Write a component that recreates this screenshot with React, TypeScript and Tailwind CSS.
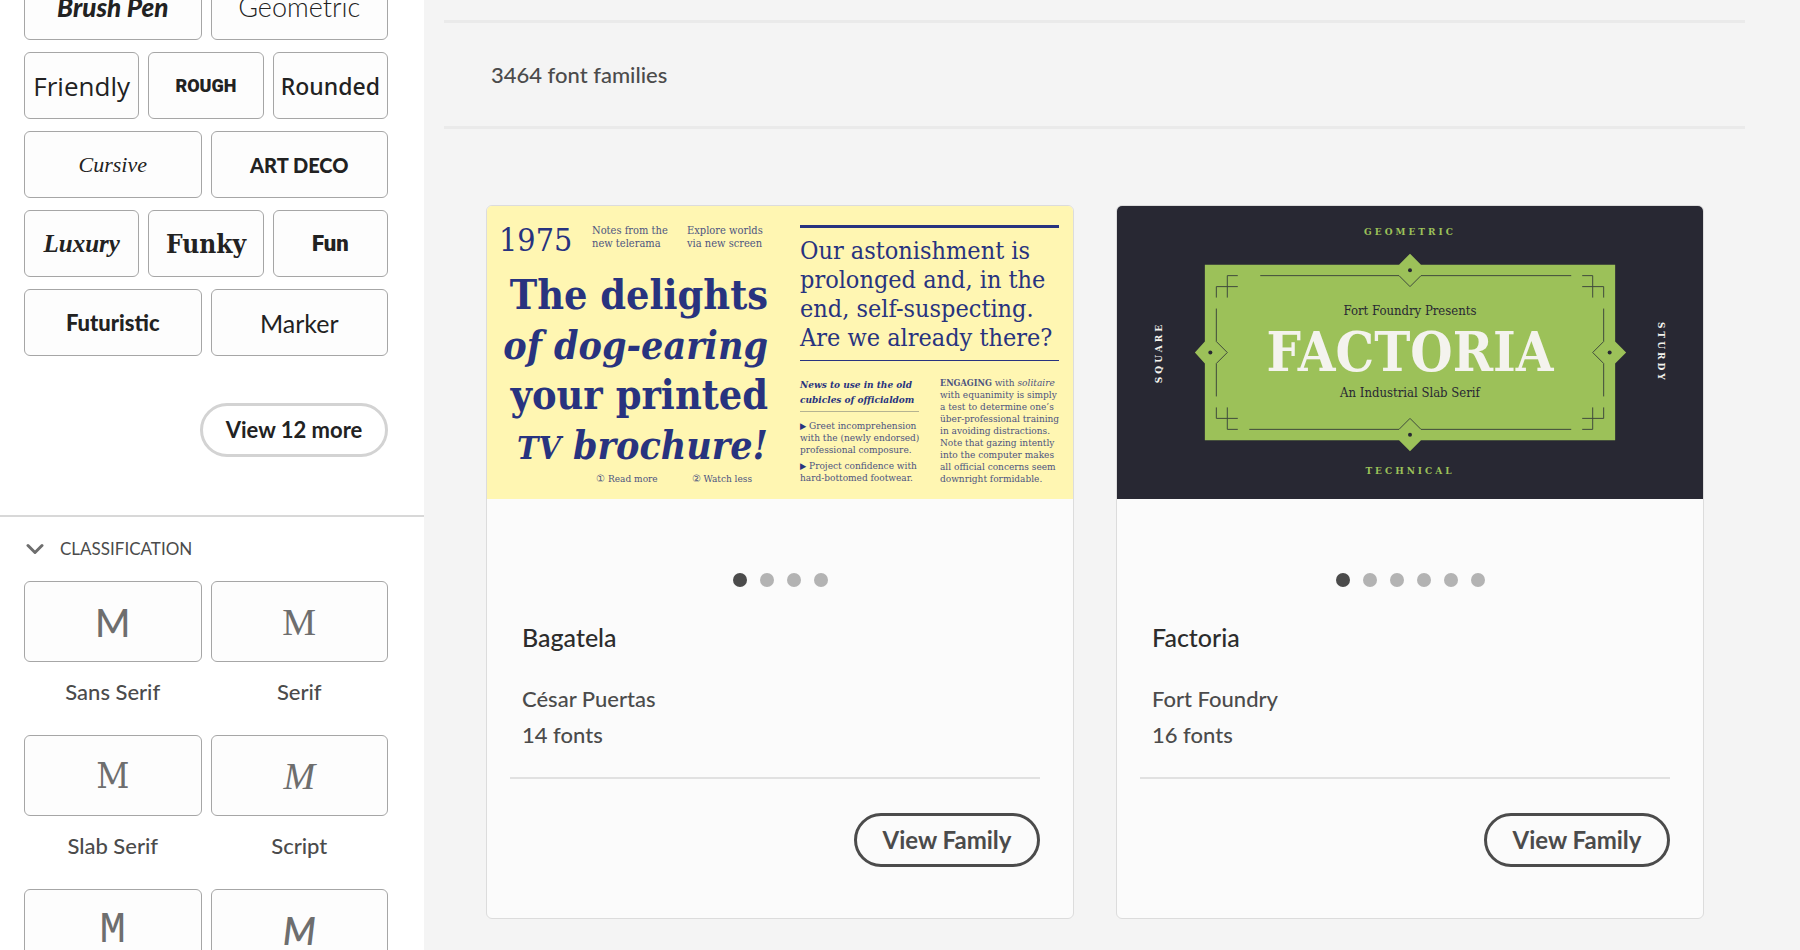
import clsx from "clsx";
import { ReactNode } from "react";

const tags = [
    { name: "Brush Pen", wide: true, font: "font-['Lato'] text-[26px] font-black italic" },
    { name: "Geometric", wide: true, font: "font-['Lato'] text-[27px] font-light" },
    { name: "Friendly", wide: false, font: "font-['Open_Sans'] text-[26px]" },
    { name: "ROUGH", wide: false, font: "font-['Roboto'] text-[18px] font-black" },
    { name: "Rounded", wide: false, font: "font-['Noto_Sans'] text-[23px] font-medium" },
    { name: "Cursive", wide: true, font: "font-['Liberation_Serif'] text-[22px] italic" },
    { name: "ART DECO", wide: true, font: "font-['Lato'] text-[20px] font-black" },
    { name: "Luxury", wide: false, font: "font-['Liberation_Serif'] text-[25px] font-bold italic" },
    { name: "Funky", wide: false, font: "font-['DejaVu_Serif_Condensed'] text-[26px] font-bold" },
    { name: "Fun", wide: false, font: "font-['Roboto'] text-[22px] font-black" },
    { name: "Futuristic", wide: true, font: "font-['Lato'] text-[22px] font-black" },
    { name: "Marker", wide: true, font: "font-['Lato'] text-[25px]" },
];

const classifications = [
    { name: "Sans Serif", font: "font-['Lato'] text-[38px] font-medium" },
    { name: "Serif", font: "font-['Liberation_Serif'] text-[38px]" },
    { name: "Slab Serif", font: "font-['DejaVu_Serif_Condensed'] text-[36px]" },
    { name: "Script", font: "font-['Liberation_Serif'] text-[38px] italic" },
    { name: "Mono", font: "font-['Liberation_Mono'] text-[44px]" },
    { name: "Hand", font: "font-['Lato'] text-[38px] font-semibold italic" },
];

const Sidebar = () => {
    return (
        <aside className="w-[424px] shrink-0 bg-white">
            <div className="-mt-[27px] grid grid-cols-6 gap-x-[9px] gap-y-3 pr-9 pl-6">
                {tags.map((tag) => (
                    <button
                        key={tag.name}
                        type="button"
                        className={clsx(
                            tag.wide ? "col-span-3" : "col-span-2",
                            tag.font,
                            "h-[67px] rounded-md border border-[#a6a6a6] bg-[#fdfdfd] leading-8 whitespace-nowrap text-[#222222]"
                        )}
                    >
                        {tag.name}
                    </button>
                ))}
            </div>
            <div className="mt-[47px] flex justify-end pr-9">
                <button
                    type="button"
                    className="h-[54px] w-[188px] rounded-full border-3 border-[#d3d3d3] text-[22px] leading-7 font-bold text-[#222222]"
                >
                    View 12 more
                </button>
            </div>
            <section className="mt-[58px] border-t-2 border-[#d8d8d8] pr-9 pl-6">
                <h2 className="flex h-16 items-center gap-4 text-[17px] leading-6 text-[#4b4b4b]">
                    <svg
                        viewBox="0 0 20 14"
                        className="h-[14px] w-5 fill-none stroke-[#6e6e6e] stroke-3"
                        strokeLinecap="round"
                        strokeLinejoin="round"
                        aria-hidden="true"
                    >
                        <path d="M4 3.5l7 7 7-7" />
                    </svg>
                    CLASSIFICATION
                </h2>
                <div className="grid grid-cols-2 gap-x-[9px]">
                    {classifications.map((item) => (
                        <button
                            key={item.name}
                            type="button"
                            className="flex h-[154px] flex-col"
                        >
                            <span
                                className={clsx(
                                    item.font,
                                    "flex h-[81px] w-full items-center justify-center rounded-md border border-[#a6a6a6] bg-[#fdfdfd] leading-10 text-[#6e6e6e]"
                                )}
                                aria-hidden="true"
                            >
                                M
                            </span>
                            <span className="mt-4 w-full text-center text-[22px] leading-7 font-medium text-[#4b4b4b]">
                                {item.name}
                            </span>
                        </button>
                    ))}
                </div>
            </section>
        </aside>
    );
};

const BagatelaArt = () => {
    return (
        <div className="flex aspect-[2/1] justify-between bg-[#fff6b2] pr-[14px] pl-3 font-['DejaVu_Serif_Condensed','DejaVu_Serif',serif] text-[#28337f]">
            <div className="w-[269px] pt-[18px]">
                <div className="flex text-[11px] leading-[13px] whitespace-nowrap text-[#4d5480]">
                    <p className="w-[93px] text-[32px] leading-8 text-[#28337f]">1975</p>
                    <p className="w-[95px]">
                        Notes from the
                        <br />
                        new telerama
                    </p>
                    <p>
                        Explore worlds
                        <br />
                        via new screen
                    </p>
                </div>
                <p className="mt-[14px] text-right text-[41px] leading-[50px] font-bold whitespace-nowrap">
                    The delights
                    <br />
                    <em className="text-[39px]">of dog-earing</em>
                    <br />
                    your printed
                    <br />
                    <em className="text-[39px]">
                        <span className="text-[32px]">TV</span> brochure!
                    </em>
                </p>
                <div className="flex justify-end gap-[34px] pr-4 text-[10px] leading-3 text-[#4d5480]">
                    <span>① Read more</span>
                    <span>② Watch less</span>
                </div>
            </div>
            <div className="w-[259px] pt-[19px]">
                <p className="border-t-3 border-b border-[#28337f] pt-2 pb-2 text-[25px] leading-[29px] whitespace-nowrap">
                    Our astonishment is
                    <br />
                    prolonged and, in the
                    <br />
                    end, self-suspecting.
                    <br />
                    Are we already there?
                </p>
                <div className="mt-4 flex justify-between text-[10px] leading-3 whitespace-nowrap text-[#4d5480]">
                    <div className="w-[119px]">
                        <p className="border-b border-[#b5b391] pb-1 leading-[15px] font-bold text-[#28337f] italic">
                            News to use in the old
                            <br />
                            cubicles of officialdom
                        </p>
                        <p className="mt-2">
                            <span className="text-[9px] text-[#28337f]">▶</span> Greet incomprehension
                            <br />
                            with the (newly endorsed)
                            <br />
                            professional composure.
                        </p>
                        <p className="mt-1">
                            <span className="text-[9px] text-[#28337f]">▶</span> Project confidence with
                            <br />
                            hard-bottomed footwear.
                        </p>
                    </div>
                    <p className="w-[119px]">
                        <b className="text-[9px]">ENGAGING</b> with <i>solitaire</i>
                        <br />
                        with equanimity is simply
                        <br />
                        a test to determine one’s
                        <br />
                        über-professional training
                        <br />
                        in avoiding distractions.
                        <br />
                        Note that gazing intently
                        <br />
                        into the computer makes
                        <br />
                        all official concerns seem
                        <br />
                        downright formidable.
                    </p>
                </div>
            </div>
        </div>
    );
};

const FactoriaArt = () => {
    return (
        <div className="relative aspect-[2/1] bg-[#282833] font-['DejaVu_Serif_Condensed','DejaVu_Serif',serif]">
            <svg viewBox="0 0 587 293" className="absolute inset-0 h-full w-full" aria-hidden="true">
                <path
                    className="fill-[#9cc159]"
                    d="M88 58.500H282.500L293.500 47.500 304.500 58.500H499V135.500L510 146.500 499 157.500V234.500H304.500L293.500 245.500 282.500 234.500H88V157.500L78 146.500 88 135.500Z"
                />
                <g className="fill-none stroke-[#3f4a3c]">
                    <path d="M143.500 69.500H282.500L293.500 80.500 304.500 69.500H455" />
                    <path d="M132.500 223.500H282.500L293.500 212.500 304.500 223.500H455" />
                    <path d="M99.500 102.500V135.500L110.500 146.500 99.500 157.500V190.500" />
                    <path d="M487.500 102.500V135.500L476.500 146.500 487.500 157.500V190.500" />
                    <path d="M121 69.500H110.500V91.500M121 80.500H99.500V91.500" />
                    <path d="M466 69.500H476.500V91.500M466 80.500H487.500V91.500" />
                    <path d="M121 223.500H110.500V201.500M121 212.500H99.500V201.500" />
                    <path d="M466 223.500H476.500V201.500M466 212.500H487.500V201.500" />
                </g>
                <g className="fill-[#282833]">
                    <circle cx="293.500" cy="64" r="2" />
                    <circle cx="293.500" cy="229" r="2" />
                    <circle cx="93.500" cy="146.500" r="2" />
                    <circle cx="493.500" cy="146.500" r="2" />
                </g>
            </svg>
            <div className="relative flex h-full items-center justify-between px-[34px] text-[10px] leading-4 font-bold tracking-[3px] text-[#f4f3ee]">
                <p className="rotate-180 [writing-mode:vertical-rl]">SQUARE</p>
                <div className="flex h-full flex-col items-center justify-between pt-[18px] pb-5">
                    <p className="text-[#9cc159]">GEOMETRIC</p>
                    <div className="text-center text-[13px] font-normal tracking-normal text-[#282833]">
                        <p>Fort Foundry Presents</p>
                        <p className="my-2 text-[54px] leading-[50px] font-bold text-[#f4f3ee]">
                            FACTORIA
                        </p>
                        <p>An Industrial Slab Serif</p>
                    </div>
                    <p className="text-[#9cc159]">TECHNICAL</p>
                </div>
                <p className="[writing-mode:vertical-rl]">STURDY</p>
            </div>
        </div>
    );
};

type FamilyCardProps = {
    name: string;
    foundry: string;
    fonts: number;
    slides: number;
    art: ReactNode;
};

const FamilyCard = ({ name, foundry, fonts, slides, art }: FamilyCardProps) => {
    return (
        <article className="overflow-hidden rounded-md border border-[#dcdcdc] bg-[#fbfbfb] pb-[51px]">
            {art}
            <div className="mt-[74px] flex justify-center gap-[13px]">
                {Array.from({ length: slides }, (_, i) => (
                    <button
                        key={i}
                        type="button"
                        aria-label={`Slide ${i + 1}`}
                        className={clsx(
                            "size-[14px] rounded-full",
                            i === 0 ? "bg-[#4b4b4b]" : "bg-[#b3b3b3]"
                        )}
                    />
                ))}
            </div>
            <div className="mr-[33px] ml-[23px]">
                <div className="border-b-2 border-[#e1e1e1] px-3 pt-[34px] pb-6">
                    <h3 className="text-[25px] leading-8 font-medium text-[#2c2c2c]">{name}</h3>
                    <div className="mt-7 text-[22px] leading-9 font-medium text-[#4b4b4b]">
                        <p>{foundry}</p>
                        <p>{fonts} fonts</p>
                    </div>
                </div>
                <div className="mt-[34px] flex justify-end">
                    <button
                        type="button"
                        className="h-[54px] w-[186px] rounded-full border-3 border-[#4b4b4b] text-[24px] leading-7 font-bold text-[#4b4b4b]"
                    >
                        View Family
                    </button>
                </div>
            </div>
        </article>
    );
};

export default function App() {
    return (
        <div className="flex h-screen overflow-hidden bg-[#f4f4f4] font-['Lato',sans-serif]">
            <Sidebar />
            <main className="flex-1 pt-5 pr-[55px] pl-5">
                <div className="flex h-[109px] items-center border-y-3 border-[#eaeaea] pl-[47px]">
                    <p className="text-[22px] leading-7 font-medium text-[#4b4b4b]">
                        3464 font families
                    </p>
                </div>
                <div className="mt-[76px] grid grid-cols-2 gap-[42px] pr-[41px] pl-[42px]">
                    <FamilyCard
                        name="Bagatela"
                        foundry="César Puertas"
                        fonts={14}
                        slides={4}
                        art={<BagatelaArt />}
                    />
                    <FamilyCard
                        name="Factoria"
                        foundry="Fort Foundry"
                        fonts={16}
                        slides={6}
                        art={<FactoriaArt />}
                    />
                </div>
            </main>
        </div>
    );
}
